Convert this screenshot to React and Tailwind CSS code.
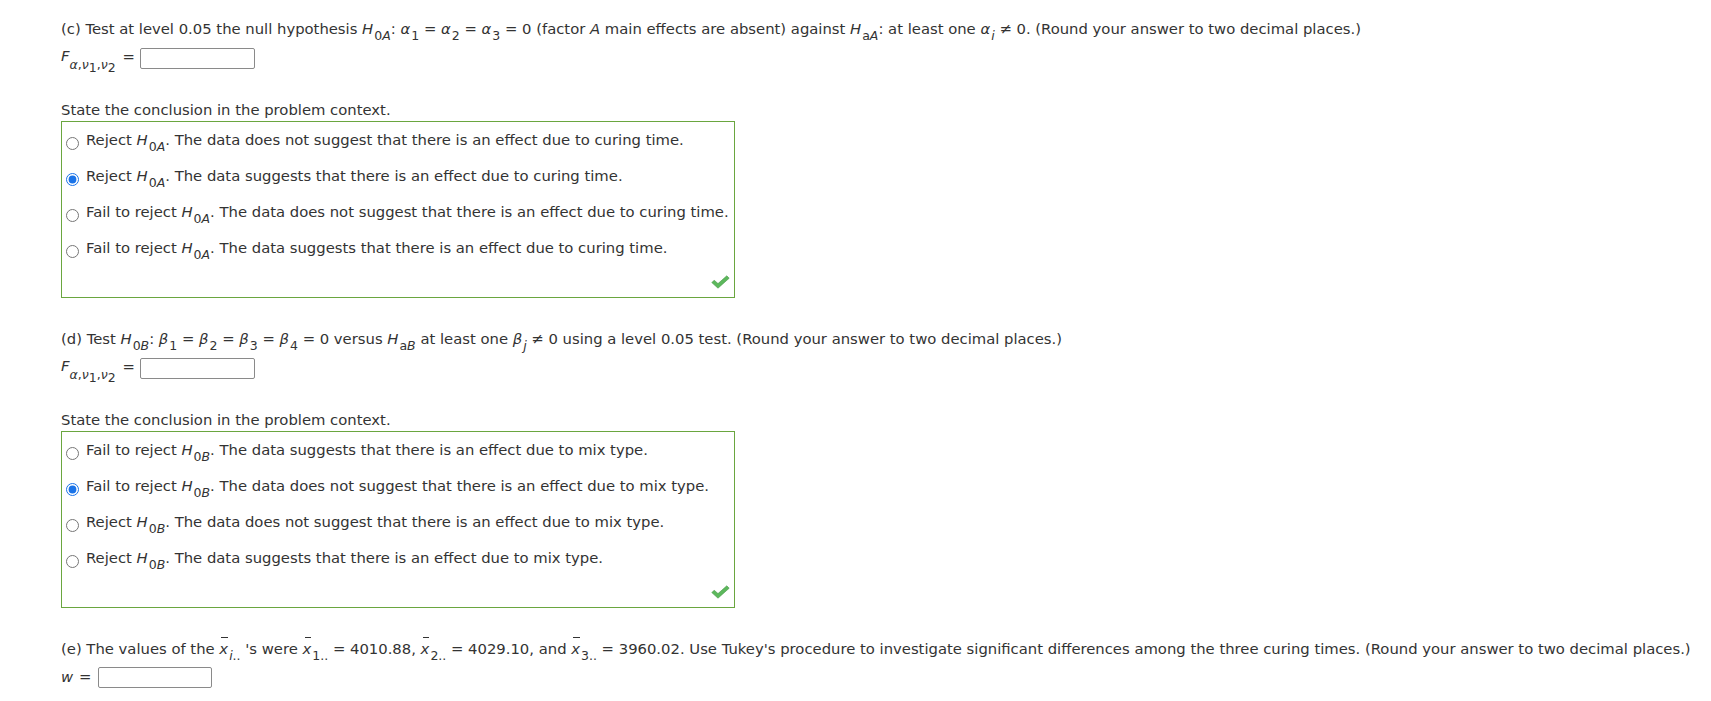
import React from 'react';

const Sub = ({ children }) => (
    <span className="text-[12.5px] align-[-6px] ml-[1px]">{children}</span>
);

const H = ({ sub }) => (
    <span>
        <i>H</i>
        <Sub>{sub}</Sub>
    </span>
);

const XBar = ({ sub }) => (
    <span>
        <span className="relative inline-block">
            <i>x</i>
            <span className="absolute left-[2px] right-0 top-[-3px] h-px bg-[#333]"></span>
        </span>
        <Sub>{sub}</Sub>
    </span>
);

const AnswerBox = ({ w = 'w-[115px]' }) => (
    <span className={`inline-block ${w} h-[21px] border border-[#8a8a8a] rounded-[2px] bg-white`}></span>
);

const FRow = () => (
    <div className="flex items-start h-[21px]">
        <span className="mr-[7px] leading-[16px] whitespace-nowrap">
            <i>F</i>
            <span className="text-[12.5px] relative top-[8px]">
                <i>α</i>,<i>ν</i>
                <span className="relative top-[3px]">1</span>,<i>ν</i>
                <span className="relative top-[3px]">2</span>
            </span>
        </span>
        <span className="mr-[5px] mt-[1px] leading-[16px]">=</span>
        <AnswerBox />
    </div>
);

const Check = () => (
    <svg width="19" height="14" viewBox="0 0 19 14">
        <path d="M0.8 7.6 L3.2 5.2 L7 8.6 L15.8 0.8 L18.2 3.2 L7 13.2 Z" fill="#5cb85c" stroke="#4c9a4c" strokeWidth="0.6" strokeLinejoin="round" />
    </svg>
);

const Option = ({ checked, children }) => (
    <label className="flex items-center h-[36px]">
        <input
            type="radio"
            checked={checked}
            readOnly
            className="ml-[4px] mr-[7px] w-[13px] h-[13px] m-0 shrink-0 accent-[#1a73e8]"
        />
        <span className="whitespace-nowrap">{children}</span>
    </label>
);

const ChoiceBox = ({ options }) => (
    <div className="w-[674px] border border-[#6aa63f] pt-[3px]">
        {options.map((o, i) => (
            <Option key={i} checked={o.checked}>
                {o.label} <H sub={o.h} />. {o.text}
            </Option>
        ))}
        <div className="flex justify-end items-end h-[28px] pr-[4px] pb-[8px]">
            <Check />
        </div>
    </div>
);

const partC = [
    { label: 'Reject', h: <>0<i>A</i></>, text: 'The data does not suggest that there is an effect due to curing time.' },
    { label: 'Reject', h: <>0<i>A</i></>, text: 'The data suggests that there is an effect due to curing time.', checked: true },
    { label: 'Fail to reject', h: <>0<i>A</i></>, text: 'The data does not suggest that there is an effect due to curing time.' },
    { label: 'Fail to reject', h: <>0<i>A</i></>, text: 'The data suggests that there is an effect due to curing time.' },
];

const partD = [
    { label: 'Fail to reject', h: <>0<i>B</i></>, text: 'The data suggests that there is an effect due to mix type.' },
    { label: 'Fail to reject', h: <>0<i>B</i></>, text: 'The data does not suggest that there is an effect due to mix type.', checked: true },
    { label: 'Reject', h: <>0<i>B</i></>, text: 'The data does not suggest that there is an effect due to mix type.' },
    { label: 'Reject', h: <>0<i>B</i></>, text: 'The data suggests that there is an effect due to mix type.' },
];

export default function App() {
    return (
        <div className="bg-white w-[1711px] h-[701px] pl-[61px] pt-[20px] text-[14.8px] text-[#333] font-['DejaVu_Sans',Verdana,sans-serif] leading-[18px] overflow-hidden">
            {/* (c) */}
            <div className="h-[20px] whitespace-nowrap">
                (c) Test at level 0.05 the null hypothesis <H sub={<>0<i>A</i></>} />: <i>α</i><Sub>1</Sub> = <i>α</i><Sub>2</Sub> = <i>α</i><Sub>3</Sub> = 0 (factor <i>A</i> main effects are absent) against <H sub={<>a<i>A</i></>} />: at least one <i>α</i><Sub><i>i</i></Sub> ≠ 0. (Round your answer to two decimal places.)
            </div>
            <div className="mt-[8px]">
                <FRow />
            </div>
            <div className="mt-[32px] h-[20px]">State the conclusion in the problem context.</div>
            <ChoiceBox options={partC} />

            {/* (d) */}
            <div className="mt-[32px] h-[20px] whitespace-nowrap">
                (d) Test <H sub={<>0<i>B</i></>} />: <i>β</i><Sub>1</Sub> = <i>β</i><Sub>2</Sub> = <i>β</i><Sub>3</Sub> = <i>β</i><Sub>4</Sub> = 0 versus <H sub={<>a<i>B</i></>} /> at least one <i>β</i><Sub><i>j</i></Sub> ≠ 0 using a level 0.05 test. (Round your answer to two decimal places.)
            </div>
            <div className="mt-[8px]">
                <FRow />
            </div>
            <div className="mt-[32px] h-[20px]">State the conclusion in the problem context.</div>
            <ChoiceBox options={partD} />

            {/* (e) */}
            <div className="mt-[32px] h-[20px] whitespace-nowrap">
                (e) The values of the <XBar sub={<><i>i</i>..</>} /> 's were <XBar sub="1.." /> = 4010.88, <XBar sub="2.." /> = 4029.10, and <XBar sub="3.." /> = 3960.02. Use Tukey's procedure to investigate significant differences among the three curing times. (Round your answer to two decimal places.)
            </div>
            <div className="mt-[7px] flex items-start h-[21px]">
                <i className="mr-[6px] leading-[20px]">w</i>
                <span className="mr-[6px] leading-[20px]">=</span>
                <AnswerBox w="w-[114px]" />
            </div>
        </div>
    );
}
